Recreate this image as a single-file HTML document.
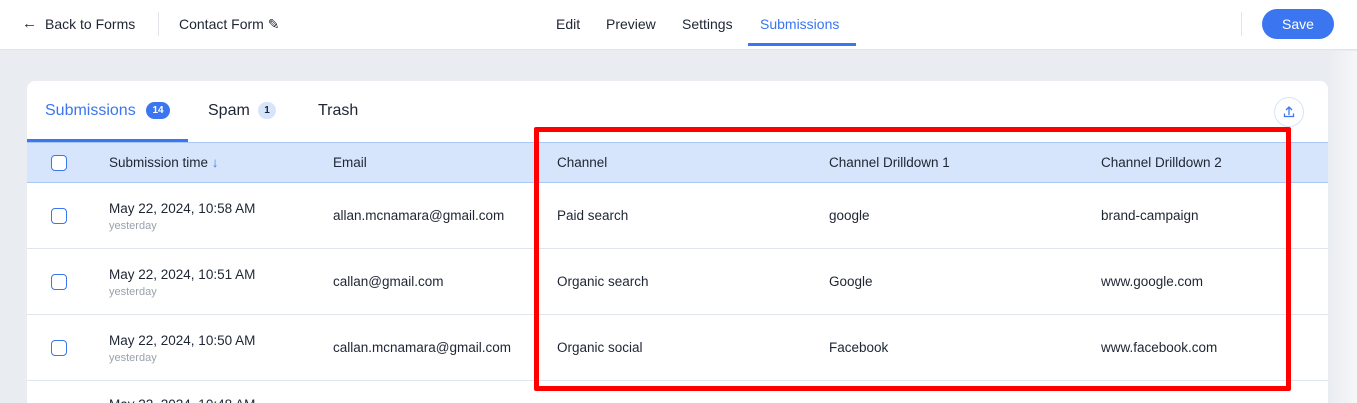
<!DOCTYPE html>
<html style="width:1357px;height:403px;overflow:hidden"><head><style>
*{margin:0;padding:0;box-sizing:border-box}
body{width:1357px;height:403px;overflow:hidden;background:#e9ecf1;font-family:"Liberation Sans",sans-serif;color:#1e2533;position:relative}
.top{position:absolute;left:0;top:0;width:1357px;height:50px;background:#fff;border-bottom:1px solid #dfe3ea}
.t{position:absolute;font-size:14px;white-space:nowrap}
.card{position:absolute;left:27px;top:81px;width:1301px;height:322px;background:#fff;border-radius:8px 8px 0 0;overflow:hidden}
.hdr{position:absolute;left:0;top:61px;width:1301px;height:41px;background:#d6e5fb;border-top:1px solid #a9c8f5;border-bottom:1px solid #a9c8f5}
.row{position:absolute;left:0;width:1301px;height:66px;border-bottom:1px solid #e1e5ec}
.cb{position:absolute;left:24px;width:16px;height:16px;border:1.5px solid #3b76f0;border-radius:4px;background:#fff}
.sub{position:absolute;font-size:11px;color:#9aa1ad}
.c{font-size:13.5px}
</style></head><body>
<div class="top">
<div class="t" style="left:22px;top:15px;font-size:15px">←</div>
<div class="t" style="left:45px;top:16px">Back to Forms</div>
<div style="position:absolute;left:158px;top:12px;width:1px;height:24px;background:#e1e4ea"></div>
<div class="t" style="left:179px;top:16px">Contact Form ✎</div>
<div class="t" style="left:556px;top:16px">Edit</div>
<div class="t" style="left:606px;top:16px">Preview</div>
<div class="t" style="left:682px;top:16px">Settings</div>
<div class="t" style="left:760px;top:16px;color:#3b76f0">Submissions</div>
<div style="position:absolute;left:748px;top:43px;width:108px;height:3px;background:#3b76f0"></div>
<div style="position:absolute;left:1241px;top:12px;width:1px;height:24px;background:#e1e4ea"></div>
<div style="position:absolute;left:1262px;top:9px;width:72px;height:30px;border-radius:15px;background:#3b76f0;color:#fff;font-size:14px;text-align:center;line-height:30px">Save</div>
</div>
<div style="position:absolute;left:1328px;top:51px;width:29px;height:352px;background:linear-gradient(90deg,#e9ecf1,#f6f7f9)"></div>
<div class="card">
<div class="t" style="left:18px;top:21px;font-size:16px;color:#3b76f0">Submissions</div>
<div style="position:absolute;left:119px;top:21px;width:24px;height:17px;border-radius:9px;background:#3b76f0;color:#fff;font-size:10px;font-weight:bold;text-align:center;line-height:17px">14</div>
<div style="position:absolute;left:0;top:58px;width:161px;height:3px;background:#3b76f0"></div>
<div class="t" style="left:181px;top:21px;font-size:16px">Spam</div>
<div style="position:absolute;left:231px;top:21px;width:18px;height:17px;border-radius:9px;background:#d6e5fb;font-size:10px;font-weight:bold;text-align:center;line-height:17px">1</div>
<div class="t" style="left:291px;top:21px;font-size:16px">Trash</div>
<div style="position:absolute;left:1247px;top:16px;width:30px;height:30px;border-radius:50%;border:1px solid #d6e5fb">
<svg width="28" height="28" viewBox="0 0 28 28"><path d="M14 9v8M11 12l3-3 3 3M9.5 15.5v3h9v-3" fill="none" stroke="#3b76f0" stroke-width="1.3"/></svg></div>
<div class="hdr">
<div class="cb" style="top:12px"></div>
<div class="t c" style="left:82px;top:12px">Submission time <span style="color:#3b76f0">↓</span></div>
<div class="t c" style="left:306px;top:12px">Email</div>
<div class="t c" style="left:530px;top:12px">Channel</div>
<div class="t c" style="left:802px;top:12px">Channel Drilldown 1</div>
<div class="t c" style="left:1074px;top:12px">Channel Drilldown 2</div>
</div>
<div class="row" style="top:102px">
<div class="cb" style="top:25px"></div>
<div class="t c" style="left:82px;top:18px">May 22, 2024, 10:58 AM</div><div class="sub" style="left:82px;top:37px">yesterday</div>
<div class="t c" style="left:306px;top:25px">allan.mcnamara@gmail.com</div>
<div class="t c" style="left:530px;top:25px">Paid search</div>
<div class="t c" style="left:802px;top:25px">google</div>
<div class="t c" style="left:1074px;top:25px">brand-campaign</div>
</div>
<div class="row" style="top:168px">
<div class="cb" style="top:25px"></div>
<div class="t c" style="left:82px;top:18px">May 22, 2024, 10:51 AM</div><div class="sub" style="left:82px;top:37px">yesterday</div>
<div class="t c" style="left:306px;top:25px">callan@gmail.com</div>
<div class="t c" style="left:530px;top:25px">Organic search</div>
<div class="t c" style="left:802px;top:25px">Google</div>
<div class="t c" style="left:1074px;top:25px">www.google.com</div>
</div>
<div class="row" style="top:234px">
<div class="cb" style="top:25px"></div>
<div class="t c" style="left:82px;top:18px">May 22, 2024, 10:50 AM</div><div class="sub" style="left:82px;top:37px">yesterday</div>
<div class="t c" style="left:306px;top:25px">callan.mcnamara@gmail.com</div>
<div class="t c" style="left:530px;top:25px">Organic social</div>
<div class="t c" style="left:802px;top:25px">Facebook</div>
<div class="t c" style="left:1074px;top:25px">www.facebook.com</div>
</div>
<div class="t c" style="left:82px;top:316px">May 22, 2024, 10:48 AM</div>
</div>
<div style="position:absolute;left:534px;top:127px;width:757px;height:264px;border:5px solid #ff0000;border-radius:2px"></div>
</body></html>
